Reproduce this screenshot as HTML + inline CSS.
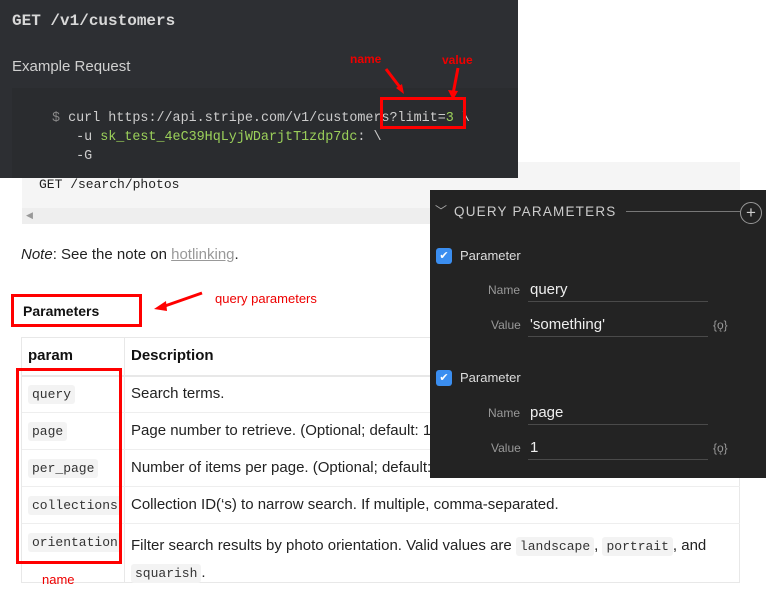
<!DOCTYPE html><html><head><style>
body{margin:0;width:766px;height:600px;background:#fff;position:relative;overflow:hidden;font-family:"Liberation Sans",sans-serif}
.a{position:absolute;white-space:nowrap}
.m{font-family:"Liberation Mono",monospace}
code{font-family:"Liberation Mono",monospace;background:#f3f3f3;border-radius:3px;padding:2px 4px;font-size:13px;color:#333}
</style></head><body>
<div class="a" style="left:22px;top:162px;width:718px;height:62px;background:#f5f5f5"></div>
<div class="a" style="left:22px;top:208px;width:718px;height:16px;background:#eee"></div>
<div class="a m" style="left:39px;top:177px;font-size:13px;color:#222">GET /search/photos</div>
<div class="a" style="left:26px;top:210px;font-size:9px;color:#999">◀</div>

<div class="a" style="left:0;top:0;width:518px;height:178px;background:#2d2f33"></div>
<div class="a" style="left:12px;top:88px;width:506px;height:90px;background:#2a2c2f"></div>
<div class="a m" style="left:12px;top:12px;font-size:16px;font-weight:bold;color:#d8d8d8">GET /v1/customers</div>
<div class="a" style="left:12px;top:58px;font-size:15px;color:#d0d0d0">Example Request</div>
<div class="a m" style="left:52px;top:109px;font-size:13.4px;line-height:19px;color:#ccc"><span style="color:#888">$</span> curl https://api.stripe.com/v1/customers?limit=<span style="color:#9bd05a">3</span> \<br>&nbsp;&nbsp;&nbsp;-u <span style="color:#9bd05a">sk_test_4eC39HqLyjWDarjtT1zdp7dc</span>: \<br>&nbsp;&nbsp;&nbsp;-G</div>
<div class="a" style="left:380px;top:97px;width:86px;height:32px;border:3px solid #f00;box-sizing:border-box"></div>
<div class="a" style="left:350px;top:52px;font-size:12px;font-weight:bold;color:#e00">name</div>
<div class="a" style="left:442px;top:53px;font-size:12px;font-weight:bold;color:#e00">value</div>
<svg class="a" style="left:380px;top:60px" width="100" height="45"><path d="M6 9L22 30" stroke="#f00" stroke-width="3"/><path d="M16 28L24 34 22 24z" fill="#f00"/><path d="M78 8L73 34" stroke="#f00" stroke-width="3"/><path d="M68 30L73 40 78 31z" fill="#f00"/></svg>

<div class="a" style="left:21px;top:246px;font-size:15px;color:#222"><i>Note</i>: See the note on <span style="color:#999;text-decoration:underline">hotlinking</span>.</div>
<div class="a" style="left:11px;top:294px;width:131px;height:33px;border:3px solid #f00;box-sizing:border-box"></div>
<div class="a" style="left:23px;top:303px;font-size:14px;font-weight:bold;color:#111">Parameters</div>
<svg class="a" style="left:150px;top:290px" width="60" height="25"><path d="M52 3L12 17" stroke="#f00" stroke-width="3"/><path d="M4 19L16 11 17 21z" fill="#f00"/></svg>
<div class="a" style="left:215px;top:291px;font-size:13px;color:#e00">query parameters</div>

<div class="a" style="left:21px;top:337px;width:719px;height:246px;border:1px solid #e8e8e8;box-sizing:border-box"></div>
<div class="a" style="left:124px;top:337px;width:1px;height:246px;background:#e8e8e8"></div>
<div class="a" style="left:22px;top:375px;width:718px;height:2px;background:#e8e8e8"></div>
<div class="a" style="left:22px;top:412px;width:718px;height:1px;background:#eee"></div>
<div class="a" style="left:22px;top:449px;width:718px;height:1px;background:#eee"></div>
<div class="a" style="left:22px;top:486px;width:718px;height:1px;background:#eee"></div>
<div class="a" style="left:22px;top:523px;width:718px;height:1px;background:#eee"></div>
<div class="a" style="left:28px;top:347px;font-size:15px;font-weight:bold;color:#111">param</div>
<div class="a" style="left:131px;top:347px;font-size:15px;font-weight:bold;color:#111">Description</div>
<div class="a" style="left:28px;top:385px"><code>query</code></div>
<div class="a" style="left:28px;top:422px"><code>page</code></div>
<div class="a" style="left:28px;top:459px"><code>per_page</code></div>
<div class="a" style="left:28px;top:496px"><code>collections</code></div>
<div class="a" style="left:28px;top:533px"><code>orientation</code></div>
<div class="a" style="left:131px;top:385px;font-size:15px;color:#222">Search terms.</div>
<div class="a" style="left:131px;top:422px;font-size:15px;color:#222">Page number to retrieve. (Optional; default: 1</div>
<div class="a" style="left:131px;top:459px;font-size:15px;color:#222">Number of items per page. (Optional; default:</div>
<div class="a" style="left:131px;top:496px;font-size:15px;color:#222">Collection ID(‘s) to narrow search. If multiple, comma-separated.</div>
<div class="a" style="left:131px;top:533px;font-size:15px;color:#222;line-height:26px">Filter search results by photo orientation. Valid values are <code>landscape</code>, <code>portrait</code>, and<br><code>squarish</code>.</div>
<div class="a" style="left:16px;top:368px;width:106px;height:196px;border:3px solid #f00;box-sizing:border-box"></div>
<div class="a" style="left:42px;top:572px;font-size:13px;color:#e00">name</div>

<div class="a" style="left:430px;top:190px;width:336px;height:288px;background:#232323"></div>
<div class="a" style="left:435px;top:202px;font-size:12px;color:#aaa">﹀</div>
<div class="a" style="left:454px;top:204px;font-size:13.5px;letter-spacing:1.2px;color:#ccc">QUERY PARAMETERS</div>
<div class="a" style="left:626px;top:211px;width:114px;height:1px;background:#777"></div>
<div class="a" style="left:740px;top:202px;width:20px;height:20px;border:1px solid #999;border-radius:50%;color:#ccc;text-align:center;line-height:19px;font-size:17px">+</div>
<div class="a" style="left:436px;top:248px;width:16px;height:16px;background:#3b8ef0;border-radius:3px;color:#fff;font-size:11px;text-align:center;line-height:16px">✔</div>
<div class="a" style="left:460px;top:248px;font-size:13px;color:#ddd">Parameter</div>
<div class="a" style="left:488px;top:283px;font-size:12px;color:#999">Name</div>
<div class="a" style="left:530px;top:281px;font-size:15px;color:#eee">query</div>
<div class="a" style="left:528px;top:301px;width:180px;height:1px;background:#4a4a4a"></div>
<div class="a" style="left:491px;top:318px;font-size:12px;color:#999">Value</div>
<div class="a" style="left:530px;top:316px;font-size:15px;color:#eee">'something'</div>
<div class="a" style="left:528px;top:336px;width:180px;height:1px;background:#4a4a4a"></div>
<div class="a" style="left:713px;top:318px;font-size:12px;color:#999">{ǫ}</div>
<div class="a" style="left:436px;top:370px;width:16px;height:16px;background:#3b8ef0;border-radius:3px;color:#fff;font-size:11px;text-align:center;line-height:16px">✔</div>
<div class="a" style="left:460px;top:370px;font-size:13px;color:#ddd">Parameter</div>
<div class="a" style="left:488px;top:406px;font-size:12px;color:#999">Name</div>
<div class="a" style="left:530px;top:404px;font-size:15px;color:#eee">page</div>
<div class="a" style="left:528px;top:424px;width:180px;height:1px;background:#4a4a4a"></div>
<div class="a" style="left:491px;top:441px;font-size:12px;color:#999">Value</div>
<div class="a" style="left:530px;top:439px;font-size:15px;color:#eee">1</div>
<div class="a" style="left:528px;top:459px;width:180px;height:1px;background:#4a4a4a"></div>
<div class="a" style="left:713px;top:441px;font-size:12px;color:#999">{ǫ}</div>
</body></html>
